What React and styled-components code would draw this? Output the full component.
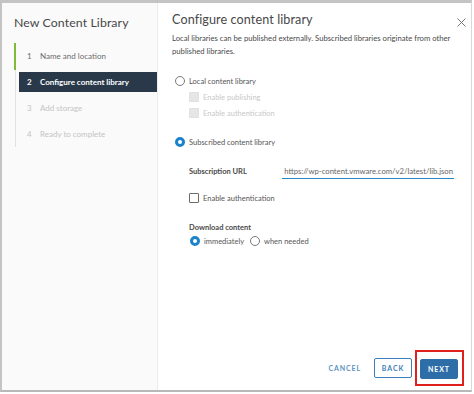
import React from "react";
import styled, { createGlobalStyle } from "styled-components";

const Global = createGlobalStyle`
  html, body { margin: 0; padding: 0; background: #ffffff; }
  body { font-family: Lato, "Open Sans", sans-serif; }
  * { box-sizing: border-box; }
`;

const Frame = styled.div`
  width: 472px;
  height: 392px;
  display: flex;
  border-top: 3px solid #c4c4c4;
  border-left: 2px solid #c4c4c4;
  border-bottom: 2px solid #b8b8b8;
  border-right: 1px solid #d8d8d8;
  background: #fff;
`;

const Sidebar = styled.div`
  width: 156px;
  flex: none;
  background: #fafafa;
  border-right: 1px solid #ececec;
  padding: 10px 0 0 12px;
`;

const WizardTitle = styled.h1`
  margin: 0 0 10px 0;
  font-size: 12.3px;
  font-weight: 400;
  letter-spacing: 0.1px;
  color: #484848;
  line-height: 20px;
  white-space: nowrap;
`;

const StepList = styled.ol`
  list-style: none;
  margin: 0 0 0 1px;
  padding: 0;
  border-left: 1px solid #e2e2e2;
  display: flex;
  flex-direction: column;
`;

const Step = styled.li`
  position: relative;
  height: 26px;
  display: flex;
  align-items: center;
  margin-left: 3px;
  padding-left: 8px;
  font-size: 8px;
  white-space: nowrap;
  color: ${(p) => (p.$state === "done" ? "#6b6b6b" : p.$state === "active" ? "#ffffff" : "#c4c4c4")};
  font-weight: ${(p) => (p.$state === "active" ? 700 : 400)};
  ${(p) =>
    p.$state === "active" &&
    `
    background: #29394a;
    height: 20px;
    margin: 3px 0 3px 3px;
  `}
  ${(p) =>
    p.$state === "done" &&
    `
    &::before {
      content: "";
      position: absolute;
      left: -5px;
      top: 0;
      width: 2px;
      height: 27px;
      background: #7fbb3a;
    }
  `}
`;

const StepNum = styled.span`
  display: inline-block;
  width: 13px;
`;

const Main = styled.div`
  flex: 1;
  display: flex;
  flex-direction: column;
  padding: 7px 5px 11px 14px;
`;

const HeaderRow = styled.div`
  display: flex;
  align-items: center;
  justify-content: space-between;
`;

const PageTitle = styled.h2`
  margin: 0;
  font-size: 12.6px;
  font-weight: 400;
  letter-spacing: 0.1px;
  color: #484848;
  line-height: 20px;
`;

const Close = styled.button`
  border: none;
  background: none;
  padding: 0;
  margin: 4px 0 0 0;
  width: 9px;
  height: 9px;
  display: flex;
`;

const Desc = styled.p`
  margin: 2px 0 0 0;
  font-size: 7.7px;
  line-height: 13px;
  color: #4a4a4a;
  padding-right: 4px;
`;

const Options = styled.div`
  display: flex;
  flex-direction: column;
  margin-top: 15px;
  padding-left: 3px;
`;

const Row = styled.label`
  display: flex;
  align-items: center;
  gap: 4px;
  height: 16px;
  font-size: 7.5px;
  color: ${(p) => (p.$disabled ? "#c8c8c8" : "#555")};
  padding-left: ${(p) => p.$indent || 0}px;
  margin-top: ${(p) => p.$mt || 0}px;
  white-space: nowrap;
`;

const Radio = styled.span`
  width: 10px;
  height: 10px;
  border-radius: 50%;
  flex: none;
  border: ${(p) => (p.$on ? "3px solid #1b83c9" : "1px solid #7a7a7a")};
  background: #fff;
`;

const Check = styled.span`
  width: 10px;
  height: 10px;
  flex: none;
  border-radius: 1px;
  border: 1px solid ${(p) => (p.$disabled ? "#e0e0e0" : "#6c6c6c")};
  background: ${(p) => (p.$disabled ? "#e6e6e6" : "#fff")};
`;

const Sub = styled.div`
  padding-left: 14px;
  display: flex;
  flex-direction: column;
`;

const FieldRow = styled.div`
  display: flex;
  align-items: center;
  height: 26px;
  margin-top: 8px;
`;

const FieldLabel = styled.span`
  width: 93px;
  font-size: 7.5px;
  font-weight: 700;
  color: #4a4a4a;
`;

const UrlInput = styled.div`
  width: 172px;
  height: 15px;
  border-bottom: 1px solid #2b86c5;
  font-size: 7.7px;
  color: #666;
  overflow: hidden;
  white-space: nowrap;
  display: flex;
  justify-content: flex-end;
  align-items: center;
  padding-right: 1px;
`;

const UrlText = styled.span`
  flex: none;
`;

const GroupLabel = styled.div`
  font-size: 7.5px;
  font-weight: 700;
  color: #4a4a4a;
  margin-top: 17px;
  height: 10px;
  line-height: 10px;
`;

const InlineRadios = styled.div`
  display: flex;
  gap: 6px;
  padding-left: 1px;
`;

const Footer = styled.div`
  margin-top: auto;
  display: flex;
  justify-content: flex-end;
  align-items: center;
  gap: 8px;
  padding-right: 8px;
`;

const Btn = styled.button`
  font-family: inherit;
  height: 20px;
  width: ${(p) => (p.$flat ? "auto" : "38px")};
  padding: 0 ${(p) => (p.$flat ? 4 : 0)}px;
  font-size: 7px;
  font-weight: 700;
  letter-spacing: 0.9px;
  border-radius: 2px;
  color: ${(p) => (p.$primary ? "#fff" : p.$flat ? "#5b93bf" : "#3b7eb8")};
  background: ${(p) => (p.$primary ? "#2d6ea8" : "#fff")};
  border: 1px solid ${(p) => (p.$primary ? "#2d6ea8" : p.$flat ? "transparent" : "#3b7eb8")};
`;

const Highlight = styled.div`
  position: relative;
  &::after {
    content: "";
    position: absolute;
    left: -5px;
    right: -6px;
    top: -6px;
    bottom: -7px;
    border: 2px solid #e0201c;
  }
`;

export default function App() {
  return (
    <>
      <Global />
      <Frame>
        <Sidebar>
          <WizardTitle>New Content Library</WizardTitle>
          <StepList>
            <Step $state="done"><StepNum>1</StepNum>Name and location</Step>
            <Step $state="active"><StepNum>2</StepNum>Configure content library</Step>
            <Step $state="todo"><StepNum>3</StepNum>Add storage</Step>
            <Step $state="todo"><StepNum>4</StepNum>Ready to complete</Step>
          </StepList>
        </Sidebar>
        <Main>
          <HeaderRow>
            <PageTitle>Configure content library</PageTitle>
            <Close aria-label="close">
              <svg width="9" height="9" viewBox="0 0 9 9">
                <path d="M0.5 0.5L8.5 8.5M8.5 0.5L0.5 8.5" stroke="#777" strokeWidth="1" />
              </svg>
            </Close>
          </HeaderRow>
          <Desc>
            Local libraries can be published externally. Subscribed libraries originate from other published libraries.
          </Desc>
          <Options>
            <Row><Radio />Local content library</Row>
            <Row $indent={14} $disabled><Check $disabled />Enable publishing</Row>
            <Row $indent={14} $disabled><Check $disabled />Enable authentication</Row>
            <Row $mt={13}><Radio $on />Subscribed content library</Row>
            <Sub>
              <FieldRow>
                <FieldLabel>Subscription URL</FieldLabel>
                <UrlInput>
                  <UrlText>https://wp-content.vmware.com/v2/latest/lib.json</UrlText>
                </UrlInput>
              </FieldRow>
              <Row $mt={6}><Check />Enable authentication</Row>
              <GroupLabel>Download content</GroupLabel>
              <InlineRadios>
                <Row><Radio $on />immediately</Row>
                <Row><Radio />when needed</Row>
              </InlineRadios>
            </Sub>
          </Options>
          <Footer>
            <Btn $flat>CANCEL</Btn>
            <Btn>BACK</Btn>
            <Highlight>
              <Btn $primary>NEXT</Btn>
            </Highlight>
          </Footer>
        </Main>
      </Frame>
    </>
  );
}
